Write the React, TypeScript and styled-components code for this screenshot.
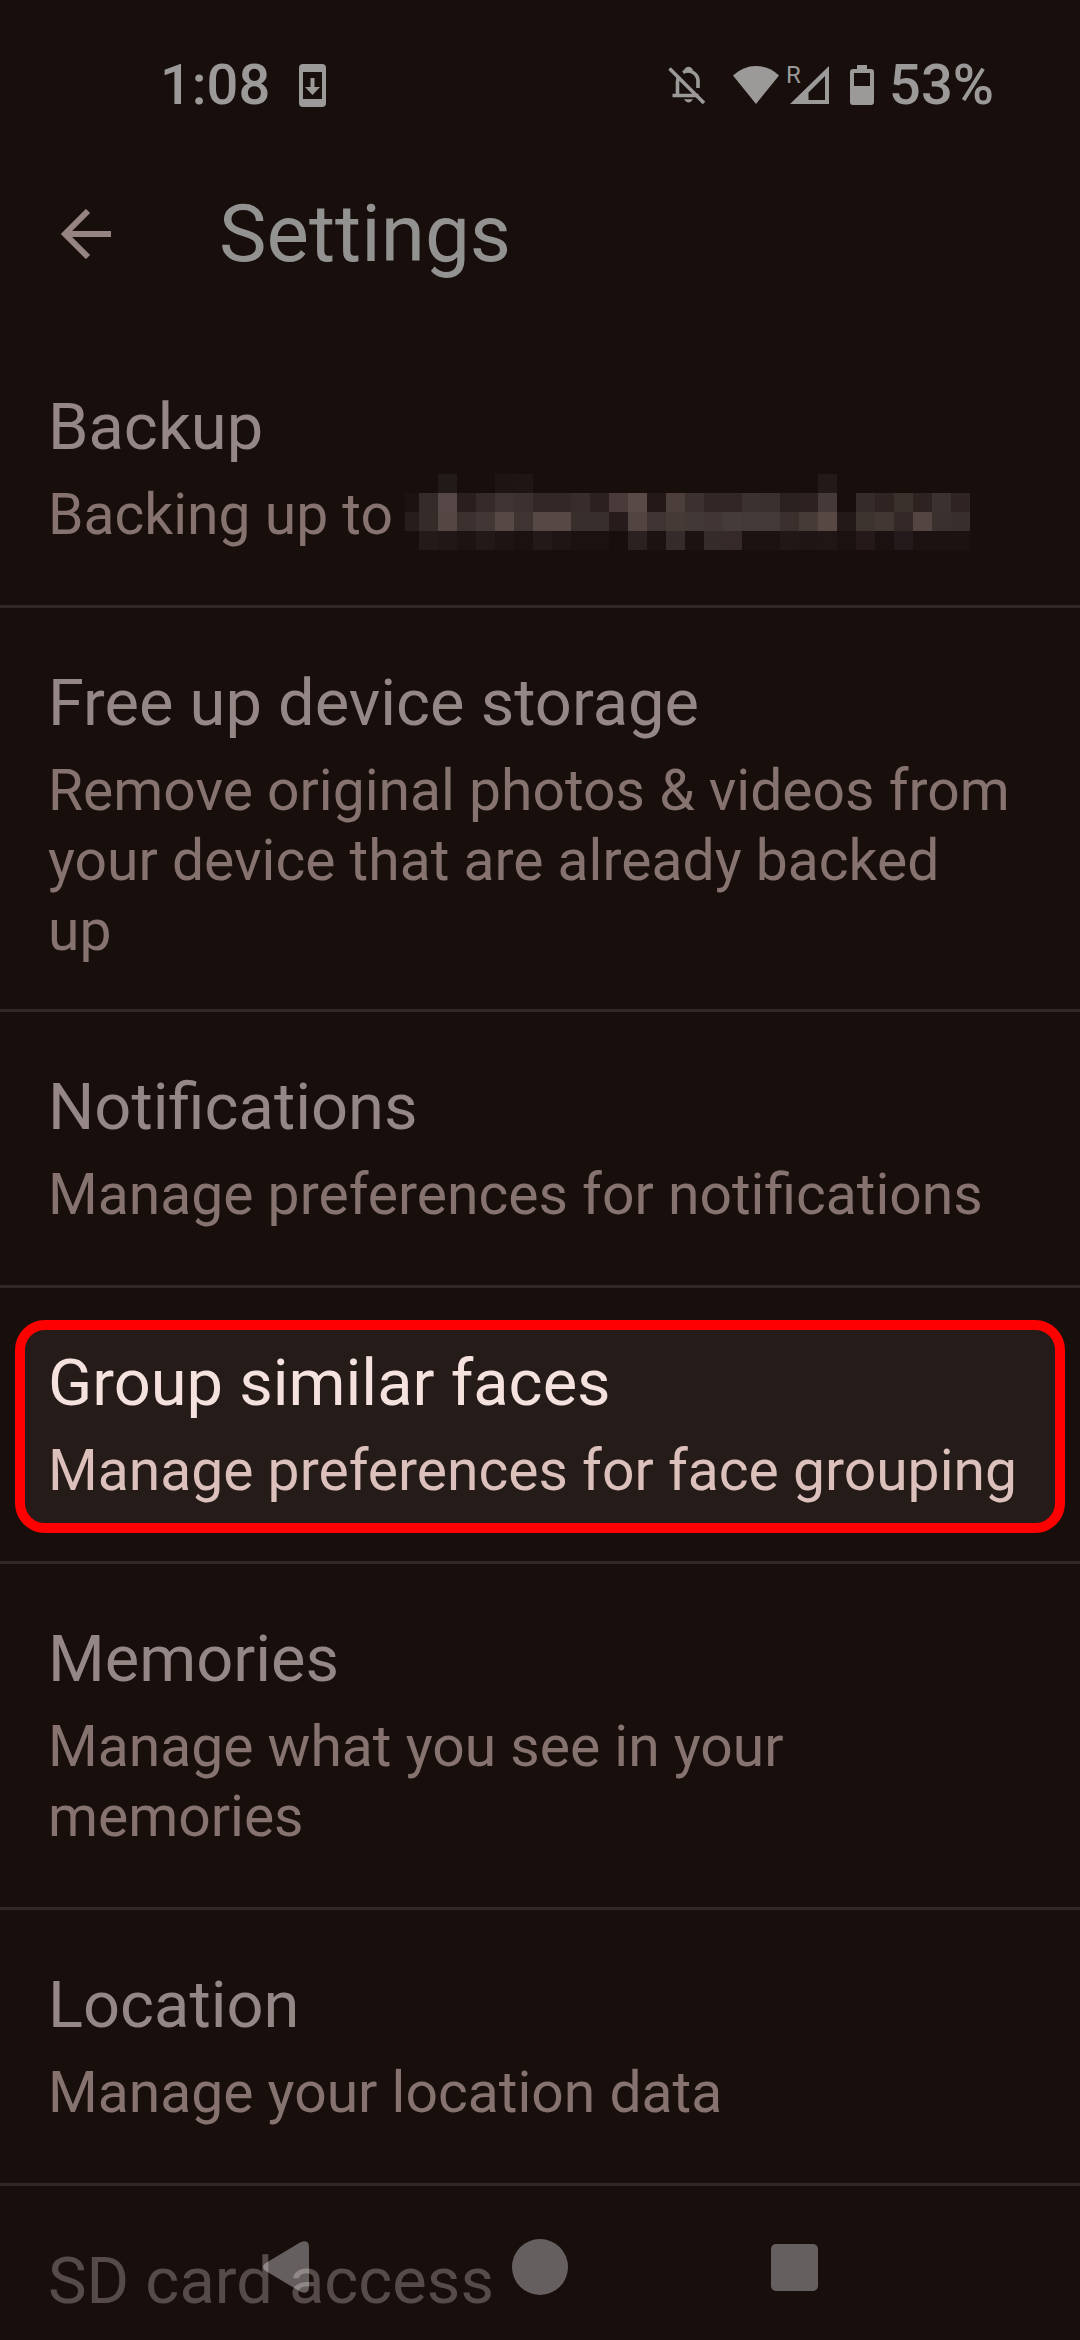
import React from "react";
import styled, { createGlobalStyle, css } from "styled-components";

const GlobalStyle = createGlobalStyle`
  * { box-sizing: border-box; }
  html, body { margin: 0; background: #180f0d; }
  body { overflow: hidden; font-family: Roboto, "Noto Sans", sans-serif; }
  button { font-family: inherit; border: 0; background: none; padding: 0; margin: 0; }
`;

const Screen = styled.div`
  height: 100vh;
  overflow: hidden;
  background: #180f0d;
`;

const StatusBar = styled.div`
  display: flex;
  align-items: center;
  justify-content: space-between;
  height: 170px;
  padding: 0 86px 0 160px;
  color: #9b9a99;
  font-size: 56px;
  font-weight: 500;
`;

const StatusGroup = styled.div`
  display: flex;
  align-items: center;
`;

const StatusIcon = styled.svg<{ $before?: number }>`
  display: block;
  flex: none;
  margin-left: ${(p) => p.$before ?? 0}px;
`;

const StatusText = styled.span<{ $before?: number }>`
  margin-left: ${(p) => p.$before ?? 0}px;
`;

const Header = styled.header`
  display: flex;
  align-items: center;
  gap: 107px;
  height: 128px;
  padding: 0 60px;
`;

const BackButton = styled.button`
  display: flex;
  color: #958481;
`;

const PageTitle = styled.h1`
  margin: 0;
  color: #929291;
  font-size: 80px;
  font-weight: 400;
`;

const List = styled.ul`
  list-style: none;
  margin: 0;
  padding: 34px 0 0;
`;

const Item = styled.li<{ $highlighted?: boolean }>`
  border-bottom: 3px solid #332725;
  ${(p) => p.$highlighted && css`padding: 32px 15px 28px;`}
`;

const Row = styled.button<{ $highlighted?: boolean; $tight?: boolean }>`
  display: flex;
  flex-direction: column;
  align-items: stretch;
  gap: 13px;
  width: 100%;
  padding: 55px 48px ${(p) => (p.$tight ? 43 : 55)}px;
  text-align: left;
  color: #948785;
  ${(p) =>
    p.$highlighted &&
    css`
      padding: 13px 23px 17px;
      border: 10px solid #ff0000;
      border-radius: 30px;
      background: #251b19;
      color: #f5e1de;
    `}
`;

const RowTitle = styled.span`
  font-size: 65px;
  line-height: 80px;
`;

const RowText = styled.span<{ $highlighted?: boolean }>`
  display: flex;
  align-items: flex-end;
  font-size: 57px;
  line-height: 70px;
  color: ${(p) => (p.$highlighted ? "#dcc0bb" : "#86736f")};
`;

const Mosaic = styled.svg`
  flex: none;
  margin: -6px 0 0 12px;
`;

const NavBar = styled.nav`
  position: fixed;
  left: 0;
  right: 0;
  bottom: 0;
  display: flex;
  justify-content: center;
  height: 146px;
  background: rgba(24, 15, 13, 0.5);
`;

const NavButton = styled.button`
  display: flex;
  align-items: center;
  justify-content: center;
  width: 254px;
  height: 146px;
  color: rgba(255, 255, 255, 0.34);
`;

const CELL = 19;
const MOSAIC_ROWS: string[] = [
  ". . 221a18 . . 1e1513 1f1513 . . . . . . . . . . . . . . . 231a18 . . . . . . .",
  "1b1211 352c2a 544745 2a1f1e 352a28 3f3431 3c312f 332826 332826 382d2b 2c2120 483b39 574a47 241918 4b3e3b 3c312f 332725 332725 3b322f 392f2c 2a201e 2d2220 453a37 . 352b28 2f2422 3a312d 2e2321 3b322f 2f2422",
  "271d1c 352b29 544643 3c312f 423735 574845 3f3431 564845 564845 382e2c 382e2c 271c1b 524541 3f3432 463a37 423836 413634 453b38 433937 433937 3a2f2d 473b38 574844 231a18 3d332f 433733 342926 544543 3a302d 382e2b",
  ". 241a19 211716 1c1312 231918 1e1413 1b1110 231918 1f1514 1b1110 1b1110 . 2b2120 1c1211 352b2a 1c1211 352b29 352a28 1c1211 1c1211 211716 1f1514 201615 1b1110 251a19 1b1110 241a1b 1c1211 1c1211 1c1211",
];

function HiddenAddress() {
  return (
    <Mosaic width="565" height="76" viewBox="-14 0 565 76" shapeRendering="crispEdges" aria-hidden="true">
      {MOSAIC_ROWS.flatMap((row, y) =>
        row.split(" ").map((color, i) =>
          color === "." ? null : (
            <rect
              key={`${y}-${i}`}
              x={i === 0 ? -14 : (i - 1) * CELL}
              y={y * CELL}
              width={i === 0 ? 14 : CELL}
              height={CELL}
              fill={`#${color}`}
            />
          )
        )
      )}
    </Mosaic>
  );
}

interface Setting {
  title: string;
  text?: React.ReactNode;
  tight?: boolean;
  highlighted?: boolean;
}

const SETTINGS: Setting[] = [
  { title: "Backup", text: <>Backing up to<HiddenAddress /></> },
  {
    title: "Free up device storage",
    text: <span>Remove original photos &amp; videos from<br />your device that are already backed<br />up</span>,
    tight: true,
  },
  { title: "Notifications", text: "Manage preferences for notifications" },
  { title: "Group similar faces", text: "Manage preferences for face grouping", highlighted: true },
  { title: "Memories", text: <span>Manage what you see in your<br />memories</span> },
  { title: "Location", text: "Manage your location data" },
  { title: "SD card access" },
];

export default function App() {
  return (
    <Screen>
      <GlobalStyle />
      <StatusBar>
        <StatusGroup>
          <StatusText>1:08</StatusText>
          <StatusIcon $before={29} width="27" height="43" viewBox="0 0 27 43" fill="currentColor" aria-hidden="true">
            <path fillRule="evenodd" d="M4 0h19a4 4 0 0 1 4 4v35a4 4 0 0 1-4 4H4a4 4 0 0 1-4-4V4a4 4 0 0 1 4-4zM4 8v27h19V8z" />
            <path d="M11.500 14h4v9h5.500l-7.500 8-7.500-8h5.500z" />
          </StatusIcon>
        </StatusGroup>
        <StatusGroup>
          <StatusIcon width="38" height="38" viewBox="0 0 38 38" fill="none" stroke="currentColor" strokeWidth="3.600" aria-hidden="true">
            <path d="M1.500 2.500 36 37" />
            <path d="M4.500 29.500h26M9.500 29V15.500q0-2.500 1.500-5M15 6.500c7-4 15 1 15 8.500v7" />
            <path d="M17 3.500q3.500-4 7 0l-.5 2h-6zM17.500 34q3 3.500 6 0z" fill="currentColor" strokeWidth="1.500" />
          </StatusIcon>
          <StatusIcon $before={27} width="46" height="38" viewBox="0 0 46 38" fill="currentColor" aria-hidden="true">
            <path d="M0 9.500Q10 0 23 0t23 9.500L23 38z" />
          </StatusIcon>
          <StatusIcon $before={6} width="44" height="50" viewBox="-3 -6 44 50" fill="currentColor" role="img" aria-label="Roaming">
            <text x="-2" y="17" fontSize="24" fontWeight="400">R</text>
            <path fillRule="evenodd" d="M41 0v38H2zM37 10 20.500 26.500V34H37z" />
          </StatusIcon>
          <StatusIcon $before={21} width="24" height="40" viewBox="0 0 24 40" fill="currentColor" aria-hidden="true">
            <path fillRule="evenodd" d="M7 0h10v4h4a3 3 0 0 1 3 3v30a3 3 0 0 1-3 3H3a3 3 0 0 1-3-3V7a3 3 0 0 1 3-3h4zM4 8v13h16V8z" />
          </StatusIcon>
          <StatusText $before={15}>53%</StatusText>
        </StatusGroup>
      </StatusBar>
      <Header>
        <BackButton type="button" aria-label="Back">
          <svg width="52" height="50" viewBox="0 0 52 50" fill="none" stroke="currentColor" strokeWidth="6">
            <path d="M51 25H6M28 2 5 25l23 23" />
          </svg>
        </BackButton>
        <PageTitle>Settings</PageTitle>
      </Header>
      <List>
        {SETTINGS.map((s) => (
          <Item key={s.title} $highlighted={s.highlighted}>
            <Row type="button" $highlighted={s.highlighted} $tight={s.tight}>
              <RowTitle>{s.title}</RowTitle>
              {s.text && <RowText $highlighted={s.highlighted}>{s.text}</RowText>}
            </Row>
          </Item>
        ))}
      </List>
      <NavBar>
        <NavButton type="button" aria-label="Back">
          <svg width="46" height="52" viewBox="0 0 46 52" fill="currentColor">
            <path d="M2 22.500 37 1.500q9-4 9 5v39q0 9-9 5L2 29.500q-4-3.500 0-7z" />
          </svg>
        </NavButton>
        <NavButton type="button" aria-label="Home">
          <svg width="56" height="56" viewBox="0 0 56 56" fill="currentColor">
            <circle cx="28" cy="28" r="28" />
          </svg>
        </NavButton>
        <NavButton type="button" aria-label="Recent apps">
          <svg width="47" height="47" viewBox="0 0 47 47" fill="currentColor">
            <rect width="47" height="47" rx="5" />
          </svg>
        </NavButton>
      </NavBar>
    </Screen>
  );
}
